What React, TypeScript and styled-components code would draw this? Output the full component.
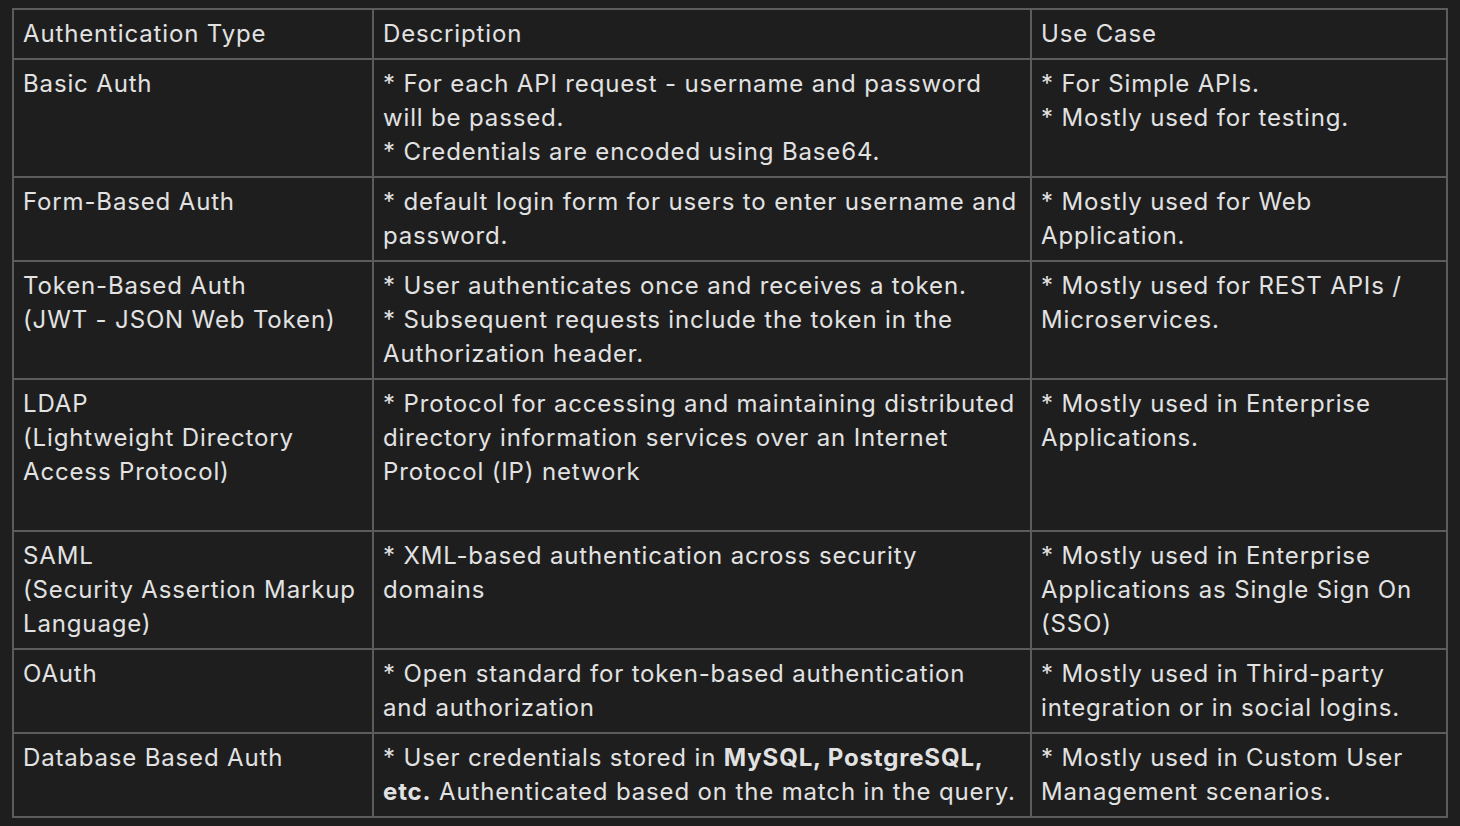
import React from 'react';
import styled, { createGlobalStyle } from 'styled-components';

const GlobalStyle = createGlobalStyle`
  html, body {
    margin: 0;
    padding: 0;
    background: #1e1e1e;
  }
  body {
    font-family: Inter, "Noto Sans", sans-serif;
    color: #e2e2e2;
  }
`;

const Page = styled.div`
  width: 1460px;
  height: 826px;
  padding: 8px 0 0 12px;
  box-sizing: border-box;
  overflow: hidden;
`;

const Table = styled.table`
  border-collapse: collapse;
  width: 1436px;
  table-layout: fixed;
  font-size: 24px;
  line-height: 34px;
  letter-spacing: 0.85px;
`;

const Cell = styled.td<{ $width?: number }>`
  box-sizing: border-box;
  border: 2px solid #5c5c5c;
  padding: 7px 9px 7px 9px;
  vertical-align: top;
  width: ${(p) => (p.$width ? `${p.$width}px` : 'auto')};
`;

const HeadCell = styled(Cell).attrs({ as: 'th' })`
  font-weight: 400;
  text-align: left;
`;

const Strong = styled.b`
  font-weight: 700;
`;

interface Row {
  type: React.ReactNode;
  desc: React.ReactNode;
  use: React.ReactNode;
}

const rows: Row[] = [
  {
    type: 'Basic Auth',
    desc: (
      <>
        * For each API request - username and password will be passed.
        <br />
        * Credentials are encoded using Base64.
      </>
    ),
    use: (
      <>
        * For Simple APIs.
        <br />
        * Mostly used for testing.
      </>
    ),
  },
  {
    type: 'Form-Based Auth',
    desc: '* default login form for users to enter username and password.',
    use: '* Mostly used for Web Application.',
  },
  {
    type: (
      <>
        Token-Based Auth
        <br />
        (JWT - JSON Web Token)
      </>
    ),
    desc: (
      <>
        * User authenticates once and receives a token.
        <br />
        * Subsequent requests include the token in the Authorization header.
      </>
    ),
    use: '* Mostly used for REST APIs / Microservices.',
  },
  {
    type: (
      <>
        LDAP
        <br />
        (Lightweight Directory Access Protocol)
        <br />
        <br />
      </>
    ),
    desc: '* Protocol for accessing and maintaining distributed directory information services over an Internet Protocol (IP) network',
    use: '* Mostly used in Enterprise Applications.',
  },
  {
    type: (
      <>
        SAML
        <br />
        (Security Assertion Markup Language)
      </>
    ),
    desc: (
      <>
        * XML-based authentication across security
        <br />
        domains
      </>
    ),
    use: '* Mostly used in Enterprise Applications as Single Sign On (SSO)',
  },
  {
    type: 'OAuth',
    desc: (
      <>
        * Open standard for token-based authentication
        <br />
        and authorization
      </>
    ),
    use: '* Mostly used in Third-party integration or in social logins.',
  },
  {
    type: 'Database Based Auth',
    desc: (
      <>
        * User credentials stored in <Strong>MySQL, PostgreSQL, etc.</Strong> Authenticated based on
        the match in the query.
      </>
    ),
    use: '* Mostly used in Custom User Management scenarios.',
  },
];

const App: React.FC = () => (
  <>
    <GlobalStyle />
    <Page>
      <Table>
        <thead>
          <tr>
            <HeadCell $width={360}>Authentication Type</HeadCell>
            <HeadCell $width={658}>Description</HeadCell>
            <HeadCell>Use Case</HeadCell>
          </tr>
        </thead>
        <tbody>
          {rows.map((r, i) => (
            <tr key={i}>
              <Cell>{r.type}</Cell>
              <Cell>{r.desc}</Cell>
              <Cell>{r.use}</Cell>
            </tr>
          ))}
        </tbody>
      </Table>
    </Page>
  </>
);

export default App;
